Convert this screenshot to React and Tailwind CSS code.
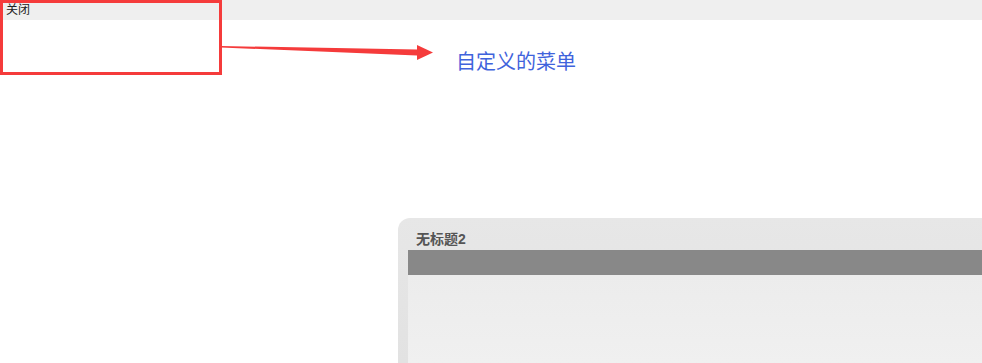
import React from 'react';

const CJK = { fontFamily: '"Liberation Sans", "Noto Sans CJK SC", sans-serif' };

export default function App() {
  return (
    <div className="relative w-full h-[363px] bg-white overflow-hidden" style={CJK}>
      {/* top bar */}
      <div className="h-[20px] bg-[#efefef] pl-[6px] text-[12px] leading-[20px] text-[#222]">关闭</div>

      {/* annotation label */}
      <div className="pt-[30px] pl-[456px] text-[20px] leading-[24px] text-[#3f63dc]">自定义的菜单</div>

      {/* window panel */}
      <div className="ml-[398px] mt-[144px] h-[145px] rounded-tl-[12px] bg-gradient-to-b from-[#e7e7e7] to-[#e2e2e2] pl-[10px] flex flex-col">
        <div className="h-[32px] pl-[8px] pt-[13px] text-[14px] leading-[16px] font-bold text-[#555]">无标题2</div>
        <div className="h-[25px] bg-[#888888]" />
        <div className="flex-1 bg-gradient-to-b from-[#ececec] to-[#f0f0f0]" />
      </div>

      {/* red annotation box + arrow */}
      <div className="absolute left-0 top-0 w-[222px] h-[75px] border-[3px] border-[#f53b3b] pointer-events-none" />
      <svg className="absolute left-0 top-0 pointer-events-none" width="982" height="100" viewBox="0 0 982 100">
        <polygon points="221,46 417,49.5 417,45 433,52.5 417,60 417,55.5 221,47.5" fill="#f53b3b" />
      </svg>
    </div>
  );
}
